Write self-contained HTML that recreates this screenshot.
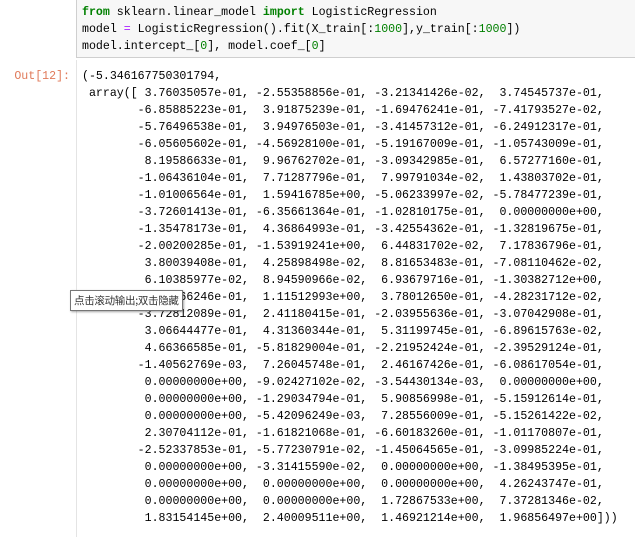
<!DOCTYPE html>
<html><head><meta charset="utf-8"><style>
body{margin:0;width:635px;height:537px;overflow:hidden;background:#fff;position:relative;font-family:"Liberation Mono","Noto Sans CJK SC",monospace;}
.in{position:absolute;left:76px;top:-10px;width:570px;height:68px;background:#f7f7f7;border:1px solid #cfcfcf;box-sizing:border-box;}
pre{margin:0;font-family:"Liberation Mono","Noto Sans CJK SC",monospace;font-size:11.6px;line-height:17px;color:#000;}
.code{position:absolute;left:82px;top:4px;}
.k{color:#008000;font-weight:bold}.o{color:#aa22ff}.n{color:#008000}
.out{position:absolute;left:82px;top:68px;}
.lbl{position:absolute;right:565px;top:68px;color:#e07a5a;font-size:11.6px;line-height:17px;}
.vl{position:absolute;left:76px;top:60px;width:1px;height:477px;background:#e4e4e4;}
.tip{position:absolute;left:70px;top:290px;width:113px;height:21px;background:#fff;border:1px solid #767676;box-shadow:1px 1px 2px rgba(0,0,0,.35);font-family:"Noto Sans CJK SC",sans-serif;font-size:10.5px;letter-spacing:-0.3px;line-height:19px;padding-left:3px;box-sizing:border-box;color:#333;white-space:nowrap;overflow:hidden;}
</style></head><body>
<div class="in"></div>
<pre class="code"><span class="k">from</span> sklearn.linear_model <span class="k">import</span> LogisticRegression
model <span class="o">=</span> LogisticRegression().fit(X_train[:<span class="n">1000</span>],y_train[:<span class="n">1000</span>])
model.intercept_[<span class="n">0</span>], model.coef_[<span class="n">0</span>]</pre>
<div class="vl"></div>
<pre class="lbl">Out[12]:</pre>
<pre class="out">(-5.346167750301794,
 array([ 3.76035057e-01, -2.55358856e-01, -3.21341426e-02,  3.74545737e-01,
        -6.85885223e-01,  3.91875239e-01, -1.69476241e-01, -7.41793527e-02,
        -5.76496538e-01,  3.94976503e-01, -3.41457312e-01, -6.24912317e-01,
        -6.05605602e-01, -4.56928100e-01, -5.19167009e-01, -1.05743009e-01,
         8.19586633e-01,  9.96762702e-01, -3.09342985e-01,  6.57277160e-01,
        -1.06436104e-01,  7.71287796e-01,  7.99791034e-02,  1.43803702e-01,
        -1.01006564e-01,  1.59416785e+00, -5.06233997e-02, -5.78477239e-01,
        -3.72601413e-01, -6.35661364e-01, -1.02810175e-01,  0.00000000e+00,
        -1.35478173e-01,  4.36864993e-01, -3.42554362e-01, -1.32819675e-01,
        -2.00200285e-01, -1.53919241e+00,  6.44831702e-02,  7.17836796e-01,
         3.80039408e-01,  4.25898498e-02,  8.81653483e-01, -7.08110462e-02,
         6.10385977e-02,  8.94590966e-02,  6.93679716e-01, -1.30382712e+00,
        -4.26166246e-01,  1.11512993e+00,  3.78012650e-01, -4.28231712e-02,
        -3.72812089e-01,  2.41180415e-01, -2.03955636e-01, -3.07042908e-01,
         3.06644477e-01,  4.31360344e-01,  5.31199745e-01, -6.89615763e-02,
         4.66366585e-01, -5.81829004e-01, -2.21952424e-01, -2.39529124e-01,
        -1.40562769e-03,  7.26045748e-01,  2.46167426e-01, -6.08617054e-01,
         0.00000000e+00, -9.02427102e-02, -3.54430134e-03,  0.00000000e+00,
         0.00000000e+00, -1.29034794e-01,  5.90856998e-01, -5.15912614e-01,
         0.00000000e+00, -5.42096249e-03,  7.28556009e-01, -5.15261422e-02,
         2.30704112e-01, -1.61821068e-01, -6.60183260e-01, -1.01170807e-01,
        -2.52337853e-01, -5.77230791e-02, -1.45064565e-01, -3.09985224e-01,
         0.00000000e+00, -3.31415590e-02,  0.00000000e+00, -1.38495395e-01,
         0.00000000e+00,  0.00000000e+00,  0.00000000e+00,  4.26243747e-01,
         0.00000000e+00,  0.00000000e+00,  1.72867533e+00,  7.37281346e-02,
         1.83154145e+00,  2.40009511e+00,  1.46921214e+00,  1.96856497e+00]))</pre>
<div class="tip">点击滚动输出;双击隐藏</div>
</body></html>
